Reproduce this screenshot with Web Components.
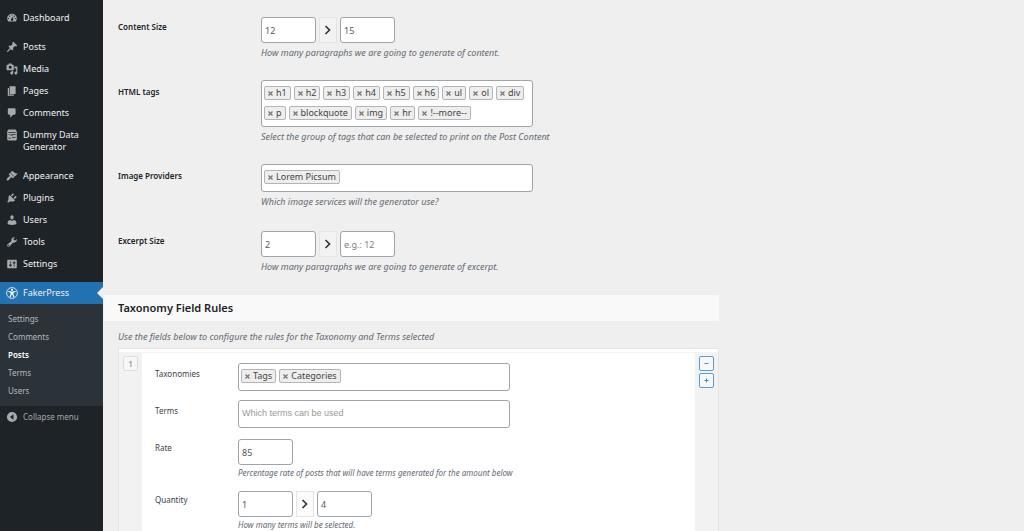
<!DOCTYPE html>
<html lang="en">
<head>
<meta charset="utf-8">
<meta name="viewport" content="width=device-width, initial-scale=1">
<title>FakerPress - Posts</title>
<style>
    html, body {
        margin: 0;
        height: 100%;
        background: #efefef;
    }

    body {
        font-family: "Noto Sans", "Open Sans", sans-serif;
        font-size: 8px;
        color: #3c434a;
    }
</style>
</head>
<body>

<fp-layout>
    <fp-menu slot="menu">
        <fp-menu-item icon="dashboard">Dashboard</fp-menu-item>
        <fp-menu-item icon="post" first>Posts</fp-menu-item>
        <fp-menu-item icon="media">Media</fp-menu-item>
        <fp-menu-item icon="page">Pages</fp-menu-item>
        <fp-menu-item icon="comments">Comments</fp-menu-item>
        <fp-menu-item icon="generator">Dummy Data Generator</fp-menu-item>
        <fp-menu-item icon="appearance" first>Appearance</fp-menu-item>
        <fp-menu-item icon="plugins">Plugins</fp-menu-item>
        <fp-menu-item icon="users">Users</fp-menu-item>
        <fp-menu-item icon="tools">Tools</fp-menu-item>
        <fp-menu-item icon="settings">Settings</fp-menu-item>
        <fp-menu-item icon="access" first current>FakerPress</fp-menu-item>
        <fp-submenu>
            <fp-submenu-item>Settings</fp-submenu-item>
            <fp-submenu-item>Comments</fp-submenu-item>
            <fp-submenu-item current>Posts</fp-submenu-item>
            <fp-submenu-item>Terms</fp-submenu-item>
            <fp-submenu-item>Users</fp-submenu-item>
        </fp-submenu>
        <fp-collapse>Collapse menu</fp-collapse>
    </fp-menu>

    <fp-fields>
        <fp-range label="Content Size" min="12" max="15">How many paragraphs we are going to generate of content.</fp-range>
        <fp-tags label="HTML tags" values="h1,h2,h3,h4,h5,h6,ul,ol,div,p,blockquote,img,hr,!--more--">Select the group of tags that can be selected to print on the Post Content</fp-tags>
        <fp-tags label="Image Providers" values="Lorem Picsum">Which image services will the generator use?</fp-tags>
        <fp-range label="Excerpt Size" min="2" placeholder="e.g.: 12">How many paragraphs we are going to generate of excerpt.</fp-range>
    </fp-fields>

    <fp-section heading="Taxonomy Field Rules">
        <span slot="intro">Use the fields below to configure the rules for the Taxonomy and Terms selected</span>
        <fp-rule index="1">
            <fp-tags compact label="Taxonomies" values="Tags,Categories"></fp-tags>
            <fp-tags compact label="Terms" placeholder="Which terms can be used"></fp-tags>
            <fp-number compact label="Rate" value="85">Percentage rate of posts that will have terms generated for the amount below</fp-number>
            <fp-range compact label="Quantity" min="1" max="4">How many terms will be selected.</fp-range>
        </fp-rule>
    </fp-section>
</fp-layout>

<script>
// Prefix for all component names
const prefix = 'fp';

// Shapes of the menu icons, all on a 20x20 grid
const icons = {
    dashboard: '<path d="M3.76 16h12.48c1.1-1.37 1.76-3.11 1.76-5 0-4.42-3.58-8-8-8s-8 3.58-8 8c0 1.89.66 3.63 1.76 5zM10 4c.55 0 1 .45 1 1s-.45 1-1 1-1-.45-1-1 .45-1 1-1zM6 6c.55 0 1 .45 1 1s-.45 1-1 1-1-.45-1-1 .45-1 1-1zm8 0c.55 0 1 .45 1 1s-.45 1-1 1-1-.45-1-1 .45-1 1-1zm-5.37 5.55L12 7v6c0 1.1-.9 2-2 2s-2-.9-2-2c0-.57.24-1.08.63-1.45zM4 10c.55 0 1 .45 1 1s-.45 1-1 1-1-.45-1-1 .45-1 1-1zm12 0c.55 0 1 .45 1 1s-.45 1-1 1-1-.45-1-1 .45-1 1-1z"/>',
    post: '<path d="M10.44 3.02l1.82-1.82 6.36 6.35-1.83 1.82c-1.05-.68-2.48-.57-3.41.36l-.75.75c-.92.93-1.04 2.35-.35 3.41l-1.83 1.82-2.41-2.41-2.8 2.79c-.42.42-3.38 2.71-3.8 2.29s1.86-3.39 2.28-3.81l2.79-2.79L4.1 9.36l1.83-1.82c1.05.69 2.48.57 3.4-.36l.75-.75c.93-.92 1.05-2.35.36-3.41z"/>',
    media: '<path d="M13 11V4c0-.55-.45-1-1-1h-1.67L9 1H5L3.67 3H2c-.55 0-1 .45-1 1v7c0 .55.45 1 1 1h10c.55 0 1-.45 1-1zM7 4.5c1.38 0 2.5 1.12 2.5 2.5S8.38 9.5 7 9.5 4.5 8.38 4.5 7 5.62 4.5 7 4.5zM14 6h5v10.5c0 1.38-1.12 2.5-2.5 2.5S14 17.88 14 16.5s1.12-2.5 2.5-2.5c.17 0 .34.02.5.05V9h-3V6zm-4 8.05V13h2v3.5c0 1.38-1.12 2.5-2.5 2.5S7 17.88 7 16.5 8.12 14 9.5 14c.17 0 .34.02.5.05z"/>',
    page: '<path d="M6 15V2h10v13H6zm-1 1h8v2H3V5h2v11z"/>',
    comments: '<path d="M5 2h9c1.1 0 2 .9 2 2v7c0 1.1-.9 2-2 2h-2l-5 5v-5H5c-1.1 0-2-.9-2-2V4c0-1.1.9-2 2-2z"/>',
    generator: '<path fill-rule="evenodd" d="M4 1h12l2 3v13c0 1.100-.9 2-2 2H4c-1.100 0-2-.9-2-2V4zm0 4v1.200h12V5zm0 4v1.200h3l2 1.300 3-2h4V8.300h-5l-2 1.800-2-1.100zm0 5.500v1.200h4v-1.200zm6-1v1.200h6v-1.200z"/>',
    appearance: '<path d="M14.48 11.06L7.41 3.99l1.5-1.5c.5-.56 2.3-.47 3.51.32 1.21.8 1.43 1.28 2.91 2.1 1.18.64 2.45 1.26 4.45.85zm-.71.71L6.7 4.7 4.93 6.47c-.39.39-.39 1.02 0 1.41l1.06 1.06c.39.39.39 1.03 0 1.42-.6.6-1.43 1.11-2.21 1.69-.35.26-.7.53-1.01.84C1.43 14.23.4 16.08 1.4 17.07c.99 1 2.84-.03 4.18-1.36.31-.31.58-.66.85-1.02.57-.78 1.08-1.61 1.69-2.21.39-.39 1.02-.39 1.41 0l1.06 1.06c.39.39 1.02.39 1.41 0z"/>',
    plugins: '<path d="M13.11 4.36L9.87 7.6 8 5.73l3.24-3.24c.35-.34 1.05-.2 1.56.32.52.51.66 1.21.31 1.55zm-8 1.77l.91-1.12 9.01 9.01-1.19.84c-.71.71-2.63 1.16-3.82 1.16H6.14L4.9 17.26c-.59.59-1.54.59-2.12 0-.59-.58-.59-1.53 0-2.12l1.24-1.24v-3.88c0-1.13.4-3.19 1.09-3.89zm7.26 3.97l3.24-3.24c.34-.35 1.04-.21 1.55.31.52.51.66 1.21.31 1.55l-3.24 3.25z"/>',
    users: '<path d="M10 9.25c-2.27 0-2.73-3.44-2.73-3.44C7 4.02 7.82 2 9.97 2c2.16 0 2.98 2.02 2.71 3.81 0 0-.41 3.44-2.68 3.44zm0 2.57L12.72 10c2.39 0 4.52 2.33 4.52 4.53v2.49s-3.65 1.13-7.24 1.13c-3.65 0-7.24-1.13-7.24-1.13v-2.49c0-2.25 1.94-4.48 4.47-4.48z"/>',
    tools: '<path d="M16.68 9.77c-1.34 1.34-3.3 1.67-4.95.99l-5.41 6.52c-.99.99-2.59.99-3.58 0s-.99-2.59 0-3.57l6.52-5.42c-.68-1.65-.35-3.61.99-4.95 1.28-1.28 3.12-1.62 4.72-1.06l-2.89 2.89 2.82 2.82 2.86-2.87c.53 1.58.18 3.39-1.08 4.65zM3.81 16.21c.4.39 1.04.39 1.43 0 .4-.4.4-1.04 0-1.43-.39-.4-1.03-.4-1.43 0-.39.39-.39 1.03 0 1.43z"/>',
    settings: '<path d="M18 16V4c0-.55-.45-1-1-1H3c-.55 0-1 .45-1 1v12c0 .55.45 1 1 1h14c.55 0 1-.45 1-1zM8 11h1c.55 0 1 .45 1 1s-.45 1-1 1H8v1.5c0 .28-.22.5-.5.5s-.5-.22-.5-.5V13H6c-.55 0-1-.45-1-1s.45-1 1-1h1V5.5c0-.28.22-.5.5-.5s.5.22.5.5V11zm5-2h-1c-.55 0-1-.45-1-1s.45-1 1-1h1V5.5c0-.28.22-.5.5-.5s.5.22.5.5V7h1c.55 0 1 .45 1 1s-.45 1-1 1h-1v5.5c0 .28-.22.5-.5.5s-.5-.22-.5-.5V9z"/>',
    access: '<circle cx="10" cy="10" r="9" fill="none" stroke="currentColor" stroke-width="1.300"/><circle cx="10" cy="4.700" r="1.900"/><path d="M4 6.500l4.500 1h3l4.500-1 .4 1.600-4 1.300v2.300l1.800 5-1.900.7L10.400 12h-.8l-1.900 5.400-1.900-.7 1.800-5V9.400l-4-1.300z"/>',
    collapse: '<path fill-rule="evenodd" d="M10 1.500a8.500 8.500 0 1 0 0 17 8.500 8.500 0 0 0 0-17zM12.500 5.500v9L6.500 10z"/>'
};

// Returns the svg markup for one of the icons above
function icon(name) {
    return `<svg viewBox="0 0 20 20" aria-hidden="true">${icons[name]}</svg>`;
}

// Page frame: menu on the left, content on the right
class Layout extends HTMLElement {
    constructor() {
        super();
        this.attachShadow({mode: 'open'});
        this.shadowRoot.innerHTML = `
            <style>
                :host {
                    display: grid;
                    grid-template-columns: 103px minmax(0, 1fr);
                    height: 100vh;
                    overflow: hidden;
                }

                main {
                    overflow-y: auto;
                    scrollbar-width: none;
                    padding: 15px 0 0 1px;
                }

                .wrap {
                    max-width: 615px;
                }
            </style>
            <slot name="menu"></slot>
            <main><div class="wrap"><slot></slot></div></main>
        `;
    }
}

class Menu extends HTMLElement {
    constructor() {
        super();
        this.attachShadow({mode: 'open'});
        this.shadowRoot.innerHTML = `
            <style>
                :host {
                    display: block;
                    background: #1d2327;
                    padding-top: 7px;
                    box-sizing: border-box;
                }
            </style>
            <nav aria-label="Main menu"><slot></slot></nav>
        `;
    }
}

class MenuItem extends HTMLElement {
    constructor() {
        super();
        this.attachShadow({mode: 'open'});
        this.shadowRoot.innerHTML = `
            <style>
                :host {
                    display: block;
                    color: #f0f0f1;
                }

                :host([first]) {
                    margin-top: 7px;
                }

                :host([current]) {
                    background: #2271b1;
                    position: relative;
                }

                /* Arrow that points from the content to the open item */
                :host([current])::after {
                    content: "";
                    position: absolute;
                    right: 0;
                    top: 5px;
                    border: 6px solid transparent;
                    border-left: 0;
                    border-right-color: #efefef;
                }

                a {
                    display: flex;
                    gap: 5px;
                    padding: 5px 12px 5px 6px;
                    color: inherit;
                    text-decoration: none;
                    font-size: 9px;
                    line-height: 12px;
                }

                svg {
                    flex: none;
                    width: 12px;
                    height: 12px;
                    fill: #a7aaad;
                    color: #fff;
                }

                :host([current]) svg {
                    fill: #fff;
                }
            </style>
            <a href="#">${icon(this.getAttribute('icon'))}<span><slot></slot></span></a>
        `;
    }
}

class Submenu extends HTMLElement {
    constructor() {
        super();
        this.attachShadow({mode: 'open'});
        this.shadowRoot.innerHTML = `
            <style>
                :host {
                    display: block;
                    background: #2c3338;
                    padding: 6px 0;
                }
            </style>
            <slot></slot>
        `;
    }
}

class SubmenuItem extends HTMLElement {
    constructor() {
        super();
        this.attachShadow({mode: 'open'});
        this.shadowRoot.innerHTML = `
            <style>
                :host {
                    display: block;
                    color: #b4b9be;
                }

                :host([current]) {
                    color: #fff;
                    font-weight: 600;
                }

                a {
                    display: block;
                    padding-left: 8px;
                    color: inherit;
                    text-decoration: none;
                    font-size: 8px;
                    line-height: 18px;
                }
            </style>
            <a href="#"><slot></slot></a>
        `;
    }
}

class Collapse extends HTMLElement {
    constructor() {
        super();
        this.attachShadow({mode: 'open'});
        this.shadowRoot.innerHTML = `
            <style>
                :host {
                    display: block;
                }

                button {
                    display: flex;
                    gap: 5px;
                    padding: 5px 6px;
                    border: 0;
                    background: none;
                    font: inherit;
                    font-size: 8px;
                    line-height: 12px;
                    color: #a7aaad;
                }

                svg {
                    width: 12px;
                    height: 12px;
                    fill: #a7aaad;
                }
            </style>
            <button type="button">${icon('collapse')}<span><slot></slot></span></button>
        `;
    }
}

class Fields extends HTMLElement {
    constructor() {
        super();
        this.attachShadow({mode: 'open'});
        this.shadowRoot.innerHTML = `
            <style>
                :host {
                    display: flex;
                    flex-direction: column;
                    gap: 19px;
                    padding: 0 14px 20px;
                }
            </style>
            <slot></slot>
        `;
    }
}

// Base of all the form rows: a label, a control and the description in the slot
// Child classes only give their control markup
class Field extends HTMLElement {
    constructor() {
        super();
        this.attachShadow({mode: 'open'});
        this.shadowRoot.innerHTML = `
            <style>
                :host {
                    display: grid;
                    grid-template-columns: 143px minmax(0, 1fr);
                    --desc-size: 9px;
                    --desc-line: 16px;
                    --desc-gap: 2px;
                }

                :host([compact]) {
                    grid-template-columns: 83px minmax(0, 1fr);
                    --desc-size: 8px;
                    --desc-line: 14px;
                    --desc-gap: 1px;
                }

                label {
                    padding-top: 4px;
                    line-height: 16px;
                    font-weight: 600;
                    color: #1d2327;
                }

                :host([compact]) label {
                    padding-top: 3px;
                    font-weight: 400;
                    color: #3c434a;
                }

                .desc {
                    margin-top: var(--desc-gap);
                    font-size: var(--desc-size);
                    line-height: var(--desc-line);
                    font-style: italic;
                    color: #646970;
                }

                input {
                    box-sizing: border-box;
                    margin: 0;
                    border: 1px solid #a0a3a8;
                    border-radius: 3px;
                    background: #fff;
                    font: inherit;
                    color: #50575e;
                }

                input[type=number] {
                    width: 55px;
                    height: 26px;
                    padding: 0 3px;
                    font-size: 9px;
                    appearance: textfield;
                }

                input[type=number]::-webkit-inner-spin-button {
                    display: none;
                }

                input::placeholder {
                    color: #7d8085;
                    opacity: 1;
                }

                .numbers {
                    display: flex;
                    gap: 3px;
                    padding-top: 2px;
                }

                .arrow {
                    box-sizing: border-box;
                    width: 18px;
                    height: 26px;
                    display: grid;
                    place-items: center;
                    border: 1px solid #e5e5e5;
                    background: #f3f3f3;
                }

                :host([compact]) .arrow {
                    background: #fcfcfc;
                }

                .arrow svg {
                    width: 8px;
                    height: 10px;
                    fill: none;
                    stroke: #32373c;
                    stroke-width: 1.700;
                }

                .box {
                    box-sizing: border-box;
                    display: flex;
                    flex-wrap: wrap;
                    align-content: flex-start;
                    gap: 6px 3px;
                    max-width: 272px;
                    min-height: 28px;
                    padding: 5px 2px 6px;
                    border: 1px solid #a0a3a8;
                    border-radius: 3px;
                    background: #fff;
                }

                .box input {
                    flex: 1;
                    min-width: 20px;
                    height: 14px;
                    padding: 0 1px;
                    border: 0;
                    outline: 0;
                    font-family: "Liberation Sans", Arial, sans-serif;
                    font-size: 9px;
                }

                .box input::placeholder {
                    color: #999;
                }

                .tag {
                    box-sizing: border-box;
                    height: 14px;
                    display: flex;
                    align-items: center;
                    gap: 3px;
                    padding: 0 3px;
                    border: 1px solid #b4b4b4;
                    border-radius: 2px;
                    background: #eee;
                    font-size: 9px;
                    line-height: 12px;
                    color: #444;
                }

                .tag button {
                    display: flex;
                    padding: 0;
                    border: 0;
                    background: none;
                }

                .tag svg {
                    width: 5px;
                    height: 5px;
                    stroke: #777;
                    stroke-width: 1.300;
                }
            </style>
            <label for="control">${this.getAttribute('label')}</label>
            <div>
                ${this._control()}
                ${this.textContent ? '<div class="desc"><slot></slot></div>' : ''}
            </div>
        `;
    }

    _control() {
        return '';
    }
}

class NumberField extends Field {
    _control() {
        return `<div class="numbers"><input id="control" type="number" value="${this.getAttribute('value')}"></div>`;
    }
}

class RangeField extends Field {
    _control() {
        return `
            <div class="numbers">
                <input id="control" type="number" value="${this.getAttribute('min')}">
                <span class="arrow"><svg viewBox="0 0 8 10" aria-hidden="true"><path d="M1.500 1l4 4-4 4"/></svg></span>
                <input type="number" aria-label="${this.getAttribute('label')} maximum" value="${this.getAttribute('max') || ''}" placeholder="${this.getAttribute('placeholder') || ''}">
            </div>
        `;
    }
}

class TagsField extends Field {
    _control() {
        const values = (this.getAttribute('values') || '').split(',').filter(Boolean);
        const tags = values.map(value => `<span class="tag"><button type="button" aria-label="Remove ${value}"><svg viewBox="0 0 5 5"><path d="M.5 .5l4 4M4.500 .5l-4 4"/></svg></button><span>${value}</span></span>`);
        return `<div class="box">${tags.join('')}<input id="control" type="text" placeholder="${this.getAttribute('placeholder') || ''}"></div>`;
    }
}

class Section extends HTMLElement {
    constructor() {
        super();
        this.attachShadow({mode: 'open'});
        this.shadowRoot.innerHTML = `
            <style>
                :host {
                    display: block;
                }

                h2 {
                    margin: 0;
                    padding: 0 14px;
                    background: #f9f9f9;
                    font-size: 11px;
                    font-weight: 600;
                    line-height: 26px;
                    color: #1d2327;
                }

                p {
                    margin: 8px 14px 3px;
                    font-size: 9px;
                    line-height: 16px;
                    font-style: italic;
                    color: #646970;
                }

                .rules {
                    margin-left: 14px;
                }
            </style>
            <h2>${this.getAttribute('heading')}</h2>
            <p><slot name="intro"></slot></p>
            <div class="rules"><slot></slot></div>
        `;
    }
}

// One rule of the list, with its number and the buttons that remove or add a rule
class Rule extends HTMLElement {
    constructor() {
        super();
        this.attachShadow({mode: 'open'});
        this.shadowRoot.innerHTML = `
            <style>
                :host {
                    display: grid;
                    grid-template-columns: 23px minmax(0, 1fr) 23px;
                    border: 1px solid #e5e5e5;
                    background: #f2f2f2;
                }

                .strip {
                    grid-column: 1 / -1;
                    height: 3px;
                    background: #fff;
                    border-bottom: 1px solid #f4f4f4;
                }

                .side {
                    display: flex;
                    flex-direction: column;
                    align-items: center;
                    gap: 2px;
                    padding-top: 3px;
                }

                .index, button {
                    box-sizing: border-box;
                    width: 15px;
                    height: 15px;
                    padding: 0;
                    border: 1px solid #ddd;
                    border-radius: 2px;
                    background: #f7f7f7;
                    font: inherit;
                    line-height: 13px;
                    text-align: center;
                    color: #999;
                }

                .index {
                    font-weight: 600;
                }

                button {
                    display: grid;
                    place-items: center;
                    border-color: #5b9dd0;
                }

                button svg {
                    width: 5px;
                    height: 5px;
                    stroke: #4b90c6;
                }

                .body {
                    display: flex;
                    flex-direction: column;
                    gap: 9px;
                    padding: 10px 13px 20px;
                    background: #fff;
                }
            </style>
            <div class="strip"></div>
            <div class="side"><span class="index">${this.getAttribute('index')}</span></div>
            <div class="body"><slot></slot></div>
            <div class="side">
                <button type="button" aria-label="Remove rule"><svg viewBox="0 0 5 5"><path d="M.5 2.500h4"/></svg></button>
                <button type="button" aria-label="Add rule"><svg viewBox="0 0 5 5"><path d="M.5 2.500h4M2.500 .5v4"/></svg></button>
            </div>
        `;
    }
}

customElements.define(`${prefix}-layout`, Layout);
customElements.define(`${prefix}-menu`, Menu);
customElements.define(`${prefix}-menu-item`, MenuItem);
customElements.define(`${prefix}-submenu`, Submenu);
customElements.define(`${prefix}-submenu-item`, SubmenuItem);
customElements.define(`${prefix}-collapse`, Collapse);
customElements.define(`${prefix}-fields`, Fields);
customElements.define(`${prefix}-number`, NumberField);
customElements.define(`${prefix}-range`, RangeField);
customElements.define(`${prefix}-tags`, TagsField);
customElements.define(`${prefix}-section`, Section);
customElements.define(`${prefix}-rule`, Rule);
</script>
</body>
</html>
